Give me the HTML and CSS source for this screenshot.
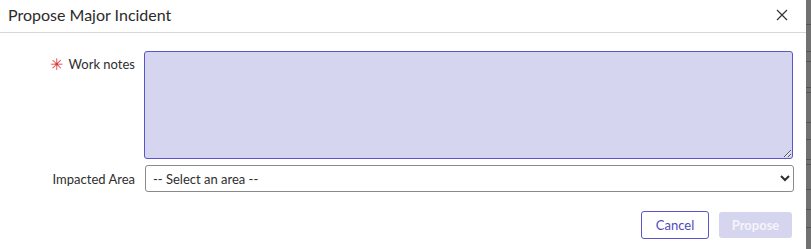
FILE: index.html
```html
<!DOCTYPE html>
<html>
<head>
<meta charset="utf-8">
<link rel="stylesheet" href="styles.css">
</head>
<body>
<div class="page">
  <div class="modal">
    <div class="header">
      <h1 class="title">Propose Major Incident</h1>
      <button class="close" aria-label="Close">
        <svg width="12" height="12" viewBox="0 0 12 12"><path d="M1 1L11 11M11 1L1 11" stroke="#333" stroke-width="1.2" fill="none"/></svg>
      </button>
    </div>
    <div class="body">
      <div class="row row-notes">
        <label class="label"><span class="req">✳</span>Work notes</label>
        <textarea class="notes"></textarea>
      </div>
      <div class="row row-area">
        <label class="label">Impacted Area</label>
        <select class="select"><option>-- Select an area --</option></select>
      </div>
    </div>
    <div class="footer">
      <button class="btn btn-cancel">Cancel</button>
      <button class="btn btn-propose">Propose</button>
    </div>
  </div>
  <div class="backdrop">
    <div class="bl" style="height:25px"></div>
    <div class="bl" style="height:27px"></div>
    <div class="bl" style="height:10px"></div>
    <div class="bl" style="height:26px"></div>
    <div class="bl" style="height:5px"></div>
    <div class="bl" style="height:30px"></div>
    <div class="bl" style="height:17px"></div>
    <div class="bl" style="height:20px"></div>
    <div class="bl" style="height:5px"></div>
    <div class="bl" style="height:25px"></div>
    <div class="bl" style="height:20px"></div>
    <div class="bl" style="height:18px"></div>
  </div>
</div>
</body>
</html>
```
FILE: styles.css
```css
* { box-sizing: border-box; }
html, body { margin: 0; padding: 0; }
body { font-family: Lato, "Open Sans", sans-serif; background: #fff; color: #2e2e2e; }
.page { display: flex; width: 811px; height: 249px; overflow: hidden; }
.modal { width: 806px; background: #fff; display: flex; flex-direction: column; }
.backdrop { width: 5px; background: #717171; display: flex; flex-direction: column; }
.bl { border-bottom: 1px solid #555; flex: none; }
.header { height: 33px; border-bottom: 1px solid #d6d6dc; display: flex; align-items: center; justify-content: space-between; padding: 0 18px 3px 8px; }
.title { margin: 0; font-size: 16px; font-weight: 400; color: #2b2b2b; }
.close { background: none; border: 0; padding: 0; display: flex; width: 12px; height: 12px; }
.body { padding: 18px 0 0 0; display: flex; flex-direction: column; gap: 6px; }
.row { display: flex; align-items: flex-start; }
.label { width: 136px; padding-right: 1px; text-align: right; font-size: 13px; color: #2e2e2e; flex: none; display: flex; justify-content: flex-end; align-items: center; }
.row-notes .label { padding-top: 5px; }
.row-area { align-items: center; }
.req { color: #e0303a; font-size: 16px; margin-right: 6px; line-height: 1; }
.notes { width: 649px; height: 108px; margin-left: 8px; background: #d5d5ef; border: 1px solid #5a55c8; border-radius: 3px; resize: vertical; font-family: inherit; }
.select { width: 649px; height: 27px; margin-left: 9px; font-family: inherit; font-size: 13px; color: #2e2e2e; background: #fff; border: 1px solid #8a8a8a; border-radius: 3px; padding: 0 3px; }
.footer { display: flex; justify-content: flex-end; gap: 10px; padding: 19px 14px 0 0; align-items: center; }
.btn { font-family: inherit; font-size: 13px; border-radius: 3px; height: 28px; cursor: pointer; }
.btn-cancel { width: 68px; background: #fff; color: #4f4ab8; border: 1px solid #5a55c8; }
.btn-propose { width: 73px; height: 26px; background: #d5d5ef; color: #f4f4fb; border: 0; font-weight: 700; }
```
